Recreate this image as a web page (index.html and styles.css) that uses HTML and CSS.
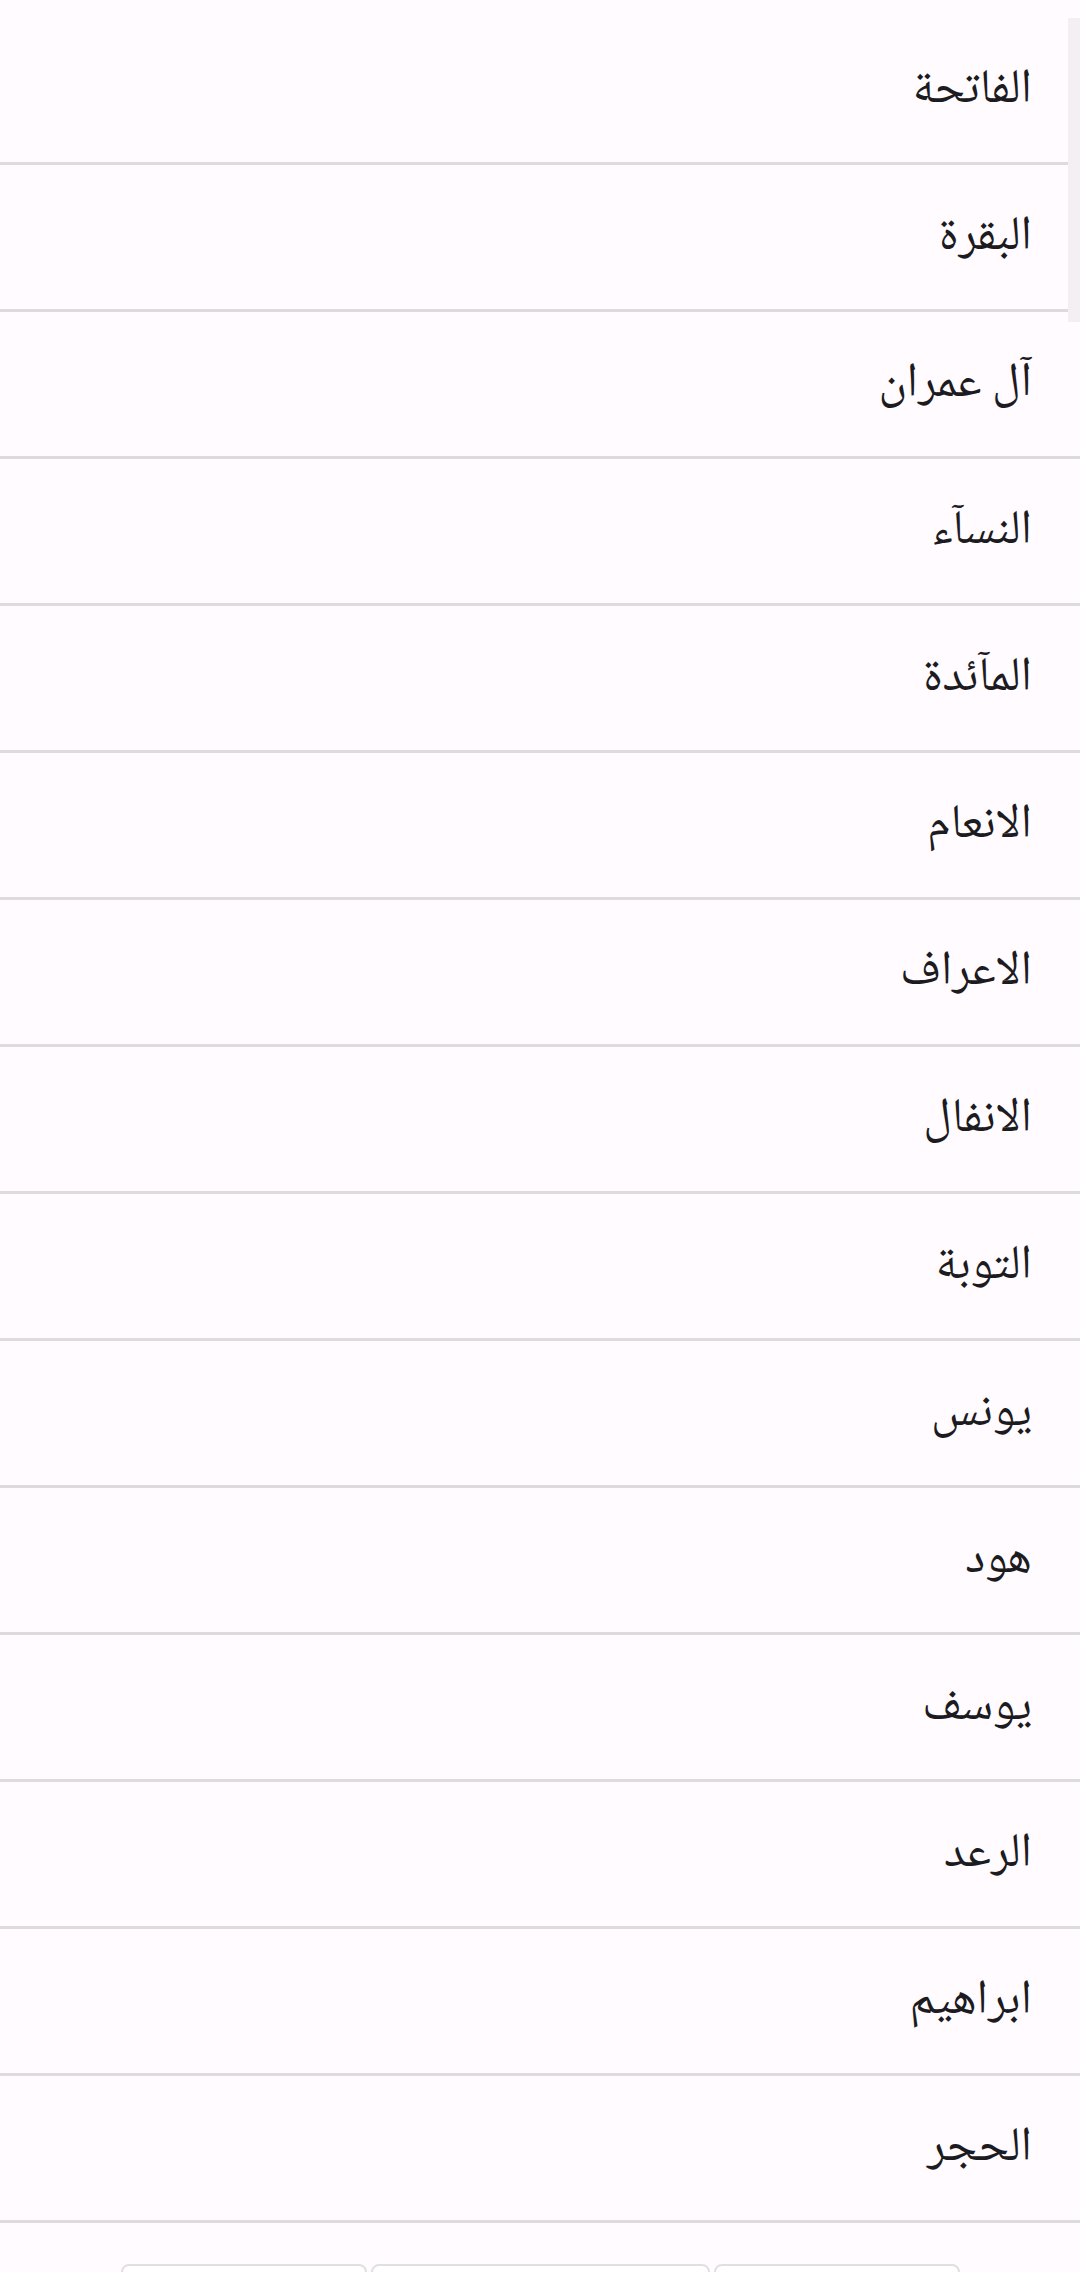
FILE: index.html
```html
<!DOCTYPE html>
<html lang="ar">
<head>
<meta charset="utf-8">
<title>سور</title>
<link rel="stylesheet" href="styles.css">
</head>
<body>
<div class="screen">
  <ul class="surah-list" dir="rtl">
    <li class="surah">الفاتحة</li>
    <li class="surah">البقرة</li>
    <li class="surah">آل عمران</li>
    <li class="surah">النسآء</li>
    <li class="surah">المآئدة</li>
    <li class="surah">الانعام</li>
    <li class="surah">الاعراف</li>
    <li class="surah">الانفال</li>
    <li class="surah">التوبة</li>
    <li class="surah">يونس</li>
    <li class="surah">هود</li>
    <li class="surah">يوسف</li>
    <li class="surah">الرعد</li>
    <li class="surah">ابراهيم</li>
    <li class="surah">الحجر</li>
  </ul>
  <div class="scrollbar"></div>
  <div class="bottom-bar">
    <div class="tab tab-side"></div>
    <div class="tab tab-mid"></div>
    <div class="tab tab-side"></div>
  </div>
</div>
</body>
</html>
```

FILE: styles.css
```css
html, body {
  margin: 0;
  padding: 0;
  background: #fffbfe;
}

body {
  width: 1080px;
  height: 2272px;
  overflow: hidden;
  font-family: "Noto Naskh Arabic UI", "Noto Naskh Arabic", "Amiri", "Scheherazade New", "Noto Sans Arabic", "DejaVu Sans", sans-serif;
  color: #1c1b1f;
}

.screen {
  position: relative;
  padding-top: 18px;
}

.surah-list {
  list-style: none;
  margin: 0;
  padding: 0;
}

.surah {
  height: 144px;
  border-bottom: 3px solid #dedbde;
  display: flex;
  align-items: center;
  padding: 0 48px;
  font-size: 48px;
  line-height: 1;
}

.scrollbar {
  position: absolute;
  top: 18px;
  right: 0;
  width: 12px;
  height: 304px;
  background: #f3eff3;
}

.bottom-bar {
  display: flex;
  justify-content: center;
  gap: 4px;
  margin-top: 41px;
}

.tab {
  height: 40px;
  box-sizing: border-box;
  background: #ffffff;
  border: 2px solid #e2dfe2;
  border-radius: 8px;
}

.tab-side {
  width: 246px;
}

.tab-mid {
  width: 339px;
}
```
